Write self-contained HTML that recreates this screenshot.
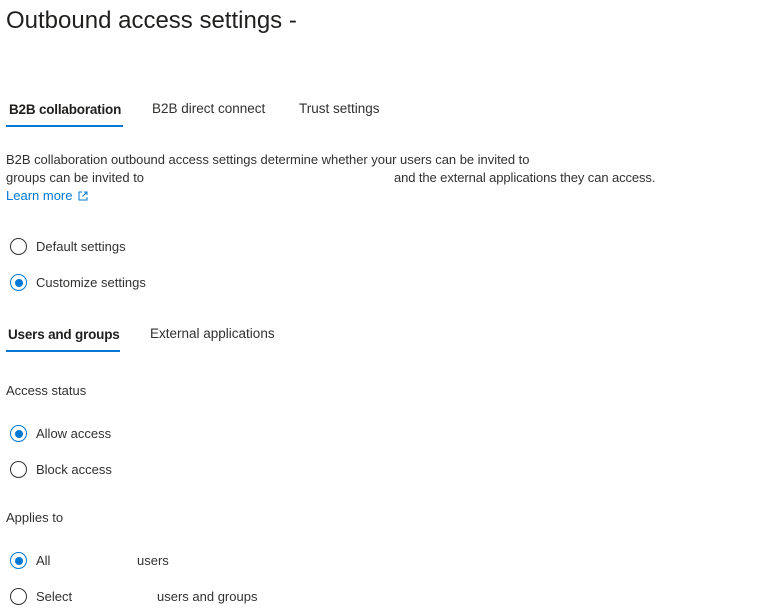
<!DOCTYPE html>
<html><head><meta charset="utf-8"><style>
body{margin:0;width:763px;height:610px;background:#fff;font-family:"Liberation Sans",sans-serif;color:#323130;position:relative;overflow:hidden}
.a{position:absolute;white-space:nowrap;font-size:13px;line-height:16px}
.t{position:absolute;left:6px;top:6px;font-size:24px;line-height:30px;color:#201f1e}
.tab{font-size:13.5px}
.b{font-weight:bold;color:#201f1e;letter-spacing:-0.2px}
.ul{position:absolute;height:2px;background:#0078d4}
.r{position:absolute;width:17px;height:17px;border:1px solid #323130;border-radius:50%;box-sizing:border-box}
.r.on{border-color:#0078d4}
.r.on::after{content:"";position:absolute;left:3.5px;top:3.5px;width:8px;height:8px;border-radius:50%;background:#0078d4}
</style></head><body>
<div class="t">Outbound access settings -</div>

<div class="a tab b" style="left:9px;top:102px">B2B collaboration</div>
<div class="ul" style="left:6px;top:125px;width:117px"></div>
<div class="a tab" style="left:152px;top:101px">B2B direct connect</div>
<div class="a tab" style="left:299px;top:101px">Trust settings</div>

<div class="a" style="left:6px;top:152px;letter-spacing:-0.03px">B2B collaboration outbound access settings determine whether your users can be invited to</div>
<div class="a" style="left:6px;top:170px">groups can be invited to</div>
<div class="a" style="left:394px;top:170px;letter-spacing:-0.1px">and the external applications they can access.</div>
<div class="a" style="left:6px;top:188px;color:#0078d4">Learn more <svg width="10" height="10" viewBox="0 0 10 10" style="vertical-align:-1px;margin-left:2px"><path d="M4 1H1v8h8V6M6 1h3v3M9 1L4.5 5.5" fill="none" stroke="#0078d4" stroke-width="1"/></svg></div>

<div class="r" style="left:10px;top:238px"></div>
<div class="a" style="left:36px;top:239px">Default settings</div>
<div class="r on" style="left:10px;top:274px"></div>
<div class="a" style="left:36px;top:275px">Customize settings</div>

<div class="a tab b" style="left:8px;top:327px">Users and groups</div>
<div class="ul" style="left:6px;top:350px;width:114px"></div>
<div class="a tab" style="left:150px;top:326px">External applications</div>

<div class="a" style="left:6px;top:383px">Access status</div>
<div class="r on" style="left:10px;top:425px"></div>
<div class="a" style="left:36px;top:426px">Allow access</div>
<div class="r" style="left:10px;top:461px"></div>
<div class="a" style="left:36px;top:462px">Block access</div>

<div class="a" style="left:6px;top:510px">Applies to</div>
<div class="r on" style="left:10px;top:552px"></div>
<div class="a" style="left:36px;top:553px">All</div>
<div class="a" style="left:137px;top:553px">users</div>
<div class="r" style="left:10px;top:588px"></div>
<div class="a" style="left:36px;top:589px">Select</div>
<div class="a" style="left:157px;top:589px">users and groups</div>
</body></html>
